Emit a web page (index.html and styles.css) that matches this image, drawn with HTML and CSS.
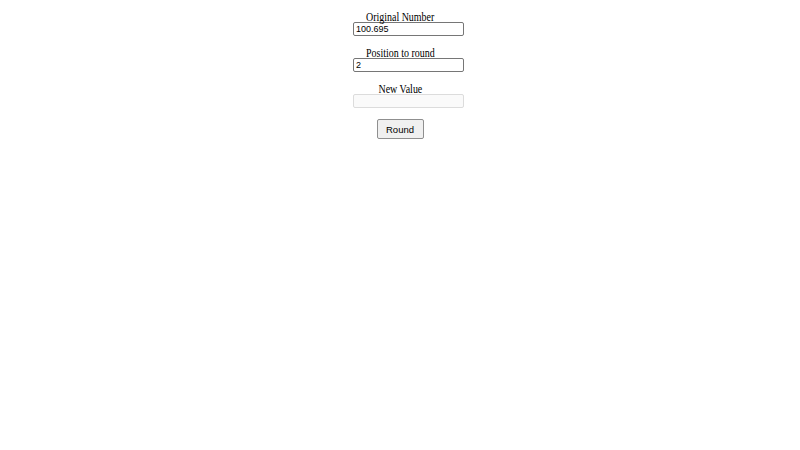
FILE: index.html
```html
<!DOCTYPE html>
<html>
<head>
<meta charset="utf-8">
<link rel="stylesheet" href="styles.css">
</head>
<body>
<div class="form">
  <div class="field">
    <label class="label">Original Number</label>
    <input class="input" type="text" value="100.695">
  </div>
  <div class="field">
    <label class="label">Position to round</label>
    <input class="input" type="text" value="2">
  </div>
  <div class="field">
    <label class="label">New Value</label>
    <input class="input" type="text" disabled>
  </div>
  <div class="actions">
    <button class="btn">Round</button>
  </div>
</div>
</body>
</html>
```
FILE: styles.css
```css
html, body { margin: 0; padding: 0; background: #fff; }
body { font-family: "Liberation Serif", serif; color: #000; }
.form { display: flex; flex-direction: column; align-items: center; padding-top: 9px; }
.field { display: flex; flex-direction: column; align-items: center; margin-bottom: 9px; }
.label { display: block; font-size: 12px; line-height: 13px; height: 11px; margin-top: 2px; transform: scaleX(0.83); }
.input {
  display: block; box-sizing: border-box; width: 111px; height: 14px; margin: 0 0 0 17px;
  padding: 0 2px; border: 1px solid #767676; border-radius: 2px;
  font-family: "Liberation Sans", sans-serif; font-size: 9px; color: #000; background: #fff;
}
.input:disabled { background: #fafafa; border-color: #dcdcdc; }
.actions { display: flex; margin-top: 2px; }
.btn {
  display: block; box-sizing: border-box; width: 47px; height: 20px; padding: 0;
  font-family: "Liberation Sans", sans-serif; font-size: 9.5px; color: #000;
  background: #f0f0f0; border: 1px solid #8f8f8f; border-radius: 2px;
}
```
